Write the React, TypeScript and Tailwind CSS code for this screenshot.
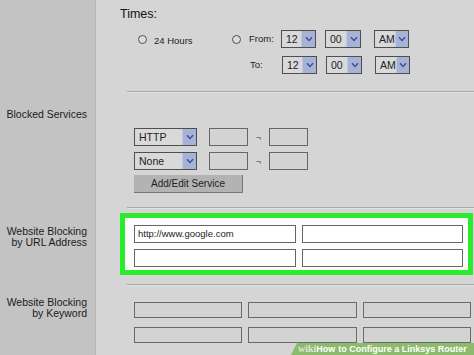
const font = "font-['Liberation_Sans',Arial,sans-serif]";

function Select({ w, label, arrow = 14 }: { w: number; label: string; arrow?: number }) {
  return (
    <div
      className="flex h-[18px] border border-[#4f4f4f] bg-[#d9d9d9] shrink-0"
      style={{ width: w }}
    >
      <div className="flex-1 pl-[4px] text-[10.5px] leading-[16px] text-[#222]">{label}</div>
      <div className="flex items-center justify-center bg-[#a6b2d6] border-l border-[#c0c7df]" style={{ width: arrow }}>
        <svg width="8" height="6" viewBox="0 0 8 6">
          <path d="M1 1.2 L4 4.6 L7 1.2" fill="none" stroke="#34479a" strokeWidth="1.3" />
        </svg>
      </div>
    </div>
  );
}

function Radio() {
  return <div className="w-[9px] h-[9px] rounded-full border border-[#505050] bg-[#dcdcdc] shrink-0" />;
}

function Box({ w, h = 18, white = false, children }: { w?: number; h?: number; white?: boolean; children?: React.ReactNode }) {
  return (
    <div
      className={`border border-[#666] shrink-0 ${white ? "bg-white flex-1 px-[3px]" : "bg-[#d3d3d3]"} text-[9.5px] text-[#222]`}
      style={{ width: w, height: h, lineHeight: `${h - 2}px` }}
    >
      {children}
    </div>
  );
}

function Label({ lines, mt }: { lines: string[]; mt: number }) {
  return (
    <div className="w-[96px] shrink-0 bg-[#c3c3c3] border-r border-[#b6b6b6] pr-[8px] text-right text-[10.5px] leading-[11px] text-[#1b1b1b]">
      <div style={{ marginTop: mt }}>
        {lines.map((l) => (
          <div key={l}>{l}</div>
        ))}
      </div>
    </div>
  );
}

function Line() {
  return <div className="ml-[31px] h-px bg-[#a9a9a9] shadow-[0_1px_0_#e2e2e2]" />;
}

export default function App() {
  return (
    <div className={`relative w-[474px] h-[355px] overflow-hidden bg-[#d5d5d5] ${font}`}>
      {/* Times */}
      <div className="flex h-[91px]">
        <Label lines={[]} mt={0} />
        <div className="flex-1 flex flex-col">
          <div className="ml-[24px] mt-[7px] text-[12.5px] leading-[15px] text-[#111]">Times:</div>
          <div className="flex items-center h-[18px] mt-[8px] text-[9.5px] text-[#222]">
            <div className="flex items-center w-[94px] ml-[42px]">
              <Radio />
              <span className="ml-[7px] mt-[4px] text-[9.5px]">24 Hours</span>
            </div>
            <Radio />
            <span className="ml-[8px] w-[32px]">From:</span>
            <Select w={35} label="12" />
            <div className="w-[9px]" />
            <Select w={36} label="00" />
            <div className="w-[13px]" />
            <Select w={35} label="AM" />
          </div>
          <div className="flex items-center h-[18px] mt-[8px] text-[9.5px] text-[#222]">
            <span className="ml-[154px] w-[32px]">To:</span>
            <Select w={35} label="12" />
            <div className="w-[9px]" />
            <Select w={36} label="00" />
            <div className="w-[13px]" />
            <Select w={35} label="AM" />
          </div>
        </div>
      </div>

      {/* Blocked services */}
      <div className="flex h-[116px]">
        <Label lines={["Blocked Services"]} mt={18} />
        <div className="flex-1 flex flex-col">
          <Line />
          <div className="ml-[38px] mt-[36px] flex flex-col gap-[6px]">
            {["HTTP", "None"].map((s) => (
              <div key={s} className="flex items-center">
                <Select w={63} label={s} />
                <div className="w-[12px]" />
                <Box w={39} />
                <span className="w-[21px] text-center text-[9px] mt-[4px] text-[#333]">¬</span>
                <Box w={39} />
              </div>
            ))}
          </div>
          <div className="ml-[38px] mt-[5px] w-[109px] h-[18px] bg-[#b3b3b3] border-b border-r border-[#777] text-center text-[10px] leading-[17px] text-[#222]">
            Add/Edit Service
          </div>
        </div>
      </div>

      {/* URL blocking */}
      <div className="flex h-[77px]">
        <Label lines={["Website Blocking", "by URL Address"]} mt={19} />
        <div className="flex-1 flex flex-col">
          <Line />
          <div className="ml-[24px] mr-px mt-[5px] h-[62px] border-[5px] border-[#2aec2a] bg-[#fcfcfc] pl-[9px] pr-[5px] pt-[7px] flex flex-col gap-[6px]">
            <div className="flex gap-[6px]">
              <Box white>http://www.google.com</Box>
              <Box white />
            </div>
            <div className="flex gap-[6px]">
              <Box white />
              <Box white />
            </div>
          </div>
        </div>
      </div>

      {/* Keyword blocking */}
      <div className="flex h-[71px]">
        <Label lines={["Website Blocking", "by Keyword"]} mt={13} />
        <div className="flex-1 flex flex-col">
          <Line />
          <div className="ml-[38px] mt-[17px] grid grid-cols-[108px_109px_108px] gap-x-[6px] gap-y-[9px]">
            {Array.from({ length: 6 }).map((_, i) => (
              <div key={i} className="h-[16px] border border-[#6a6a6a] bg-[#d3d3d3]" />
            ))}
          </div>
        </div>
      </div>

      {/* watermark */}
      <div className="absolute right-0 bottom-0 w-[183px] h-[12px] bg-[#8dbb6d] [clip-path:polygon(6px_0,100%_0,100%_100%,0_100%)] flex items-center pl-[7px] whitespace-nowrap text-[9px] leading-[12px] font-bold">
        <span className="text-[#dfe6d8] text-[10px] font-['Liberation_Serif',serif]">wiki</span>
        <span className="text-white">How</span>
        <span className="text-white ml-[3px]">to Configure a Linksys Router</span>
      </div>
    </div>
  );
}
